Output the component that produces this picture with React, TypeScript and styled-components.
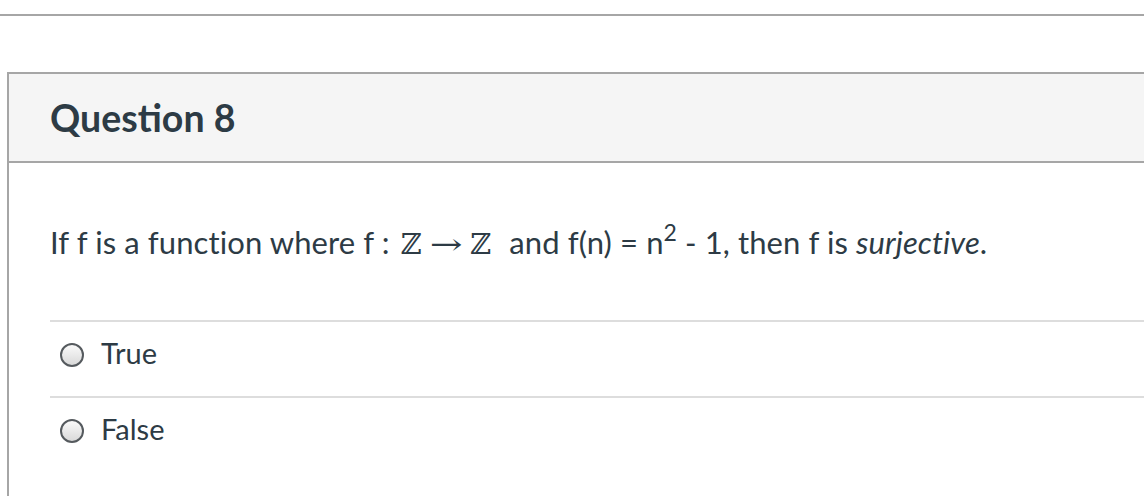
import styled, { createGlobalStyle } from 'styled-components';

const GlobalStyle = createGlobalStyle`
  html, body {
    margin: 0;
    padding: 0;
    background: #ffffff;
    overflow: hidden;
  }

  body {
    font-family: Lato, "Noto Sans", sans-serif;
    color: #2d3b45;
  }
`;

const Page = styled.div`
  width: 1144px;
  height: 496px;
  overflow: hidden;
`;

const TopRule = styled.div`
  height: 14px;
  border-bottom: 2px solid #a6a6a6;
`;

const Card = styled.section`
  margin: 56px -40px 0 7px;
  border-top: 2px solid #a6a6a6;
  border-left: 2px solid #a6a6a6;
  height: 600px;
`;

const Header = styled.header`
  height: 87px;
  background: #f5f5f5;
  border-bottom: 2px solid #a6a6a6;
  padding-left: 41px;
`;

const Title = styled.h2`
  margin: 0;
  font-size: 37.5px;
  font-weight: 700;
  line-height: 87px;
`;

const Body = styled.div`
  padding: 59px 0 0 41px;
`;

const QuestionText = styled.p`
  margin: 0 0 56px;
  font-size: 31px;
  line-height: 40px;
  letter-spacing: 0.1px;
`;

const Math = styled.span`
  font-family: "DejaVu Serif", "Liberation Serif", serif;
  font-size: 29px;
  letter-spacing: 0;
  margin: 0 10px 0 3px;
`;

const Arrow = styled.span`
  display: inline-block;
  margin: 0 12px;
  transform: scaleX(1.35);
`;

const Sup = styled.sup`
  font-size: 23px;
  line-height: 0;
  vertical-align: 13px;
`;

const AnswerList = styled.div`
  display: flex;
  flex-direction: column;
`;

const AnswerRow = styled.label`
  display: flex;
  align-items: center;
  gap: 17px;
  border-top: 2px solid #dddddd;
  padding: 16px 0 28px 10px;
  font-size: 29px;
  line-height: 30px;
`;

const Radio = styled.span`
  box-sizing: border-box;
  width: 24px;
  height: 24px;
  border-radius: 50%;
  border: 2px solid #555a5e;
  background: linear-gradient(#fafafa, #d9d9d9);
  flex: none;
  margin-top: 3px;
`;

const answers = ['True', 'False'];

const App = () => {
  return (
    <Page>
      <GlobalStyle />
      <TopRule />
      <Card>
        <Header>
          <Title>Question 8</Title>
        </Header>
        <Body>
          <QuestionText>
            If f is a function where f : <Math>ℤ<Arrow>→</Arrow>ℤ</Math> and f(n) = n<Sup>2</Sup> - 1, then f is <i>surjective</i>.
          </QuestionText>
          <AnswerList>
            {answers.map((a) => (
              <AnswerRow key={a}>
                <Radio />
                {a}
              </AnswerRow>
            ))}
          </AnswerList>
        </Body>
      </Card>
    </Page>
  );
};

export default App;
